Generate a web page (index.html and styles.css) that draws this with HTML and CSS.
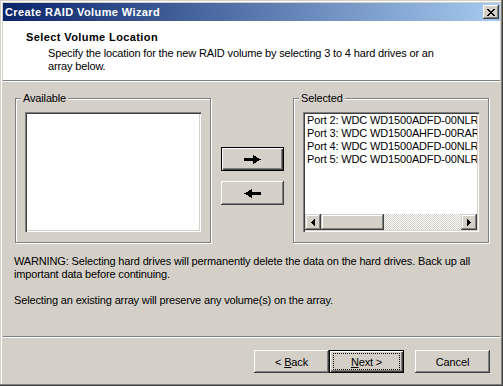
FILE: index.html
```html
<!DOCTYPE html>
<html lang="en">
<head>
  <meta charset="UTF-8" />
  <title>Create RAID Volume Wizard</title>
  <link rel="stylesheet" href="styles.css">
</head>
<body>
  <div class="window">
    <div class="titlebar">
      <span class="title">Create RAID Volume Wizard</span>
      <button class="close-btn">
        <svg width="8" height="7" viewBox="0 0 8 7"><path d="M0 0h2v1H0zM6 0h2v1H6zM1 1h2v1H1zM5 1h2v1H5zM2 2h4v1H2zM3 3h2v1H3zM2 4h4v1H2zM1 5h2v1H1zM5 5h2v1H5zM0 6h2v1H0zM6 6h2v1H6z" fill="#000"/></svg>
      </button>
    </div>

    <div class="wizard-header">
      <div class="header-title">Select Volume Location</div>
      <div class="header-desc">Specify the location for the new RAID volume by selecting 3 to 4 hard drives or an<br>array below.</div>
    </div>

    <div class="wizard-body">
      <div class="picker">
        <div class="group">
          <span class="legend">Available</span>
          <div class="listbox"></div>
        </div>

        <div class="move-btns">
          <button class="win-btn move-btn default">
            <svg width="17" height="9" viewBox="0 0 17 9" shape-rendering="crispEdges"><polygon points="0,3 9,3 9,0 17,4.5 9,9 9,6 0,6" fill="#000"/></svg>
          </button>
          <button class="win-btn move-btn">
            <svg width="17" height="9" viewBox="0 0 17 9" shape-rendering="crispEdges"><polygon points="17,3 8,3 8,0 0,4.5 8,9 8,6 17,6" fill="#000"/></svg>
          </button>
        </div>

        <div class="group">
          <span class="legend">Selected</span>
          <div class="listbox">
            <ul class="list-items">
              <li>Port 2: WDC WD1500ADFD-00NLR5</li>
              <li>Port 3: WDC WD1500AHFD-00RAR5</li>
              <li>Port 4: WDC WD1500ADFD-00NLR5</li>
              <li>Port 5: WDC WD1500ADFD-00NLR5</li>
            </ul>
            <div class="hscroll">
              <div class="scroll-btn">
                <svg width="4" height="7" viewBox="0 0 4 7"><path d="M3 0h1v7H3zM2 1h1v5H2zM1 2h1v3H1zM0 3h1v1H0z" fill="#000"/></svg>
              </div>
              <div class="scroll-thumb"></div>
              <div class="scroll-track"></div>
              <div class="scroll-btn">
                <svg width="4" height="7" viewBox="0 0 4 7"><path d="M0 0h1v7H0zM1 1h1v5H1zM2 2h1v3H2zM3 3h1v1H3z" fill="#000"/></svg>
              </div>
            </div>
          </div>
        </div>
      </div>

      <div class="notes">
        <p>WARNING: Selecting hard drives will permanently delete the data on the hard drives. Back up all<br>important data before continuing.</p>
        <p class="gap">Selecting an existing array will preserve any volume(s) on the array.</p>
      </div>
    </div>

    <div class="wizard-footer">
      <button class="win-btn footer-btn"><span>&lt; <u>B</u>ack</span></button>
      <button class="win-btn footer-btn default"><span class="focus-rect"><span><u>N</u>ext &gt;</span></span></button>
      <button class="win-btn footer-btn cancel-btn">Cancel</button>
    </div>
  </div>
</body>
</html>
```

FILE: styles.css
```css
* {
  box-sizing: border-box;
}

body {
  margin: 0;
  font-family: "Liberation Sans", Arial, sans-serif;
  font-size: 11px;
  letter-spacing: -0.15px;
  color: #000;
}

.window {
  width: 503px;
  height: 386px;
  padding: 3px;
  background: #d4d0c8;
  display: flex;
  flex-direction: column;
  box-shadow: inset -1px -1px #404040,
              inset -2px -2px #808080,
              inset 1px 1px #d4d0c8,
              inset 2px 2px #fff;
}

/* title bar */
.titlebar {
  height: 18px;
  flex-shrink: 0;
  display: flex;
  align-items: center;
  justify-content: space-between;
  padding: 0 1px 0 2px;
  background: linear-gradient(to right, #0a246a, #a6caf0);
  color: #fff;
  font-weight: bold;
  letter-spacing: 0.4px;
}

.close-btn {
  width: 16px;
  height: 14px;
  padding: 0;
  border: none;
  background: #d4d0c8;
  display: flex;
  align-items: center;
  justify-content: center;
  box-shadow: inset -1px -1px #404040,
              inset 1px 1px #fff,
              inset -2px -2px #808080;
}

/* header */
.wizard-header {
  height: 60px;
  flex-shrink: 0;
  background: #fff;
  border-bottom: 1px solid #808080;
  box-shadow: 0 1px #fff;
  padding: 10px 0 0 23px;
  line-height: 13px;
}

.header-title {
  font-weight: bold;
  letter-spacing: 0.4px;
}

.header-desc {
  margin-top: 3px;
  padding-left: 22px;
}

/* body */
.wizard-body {
  flex: 1;
  padding-top: 17px;
}

.picker {
  display: flex;
  padding-left: 12px;
}

.group {
  width: 196px;
  height: 145px;
  border: 1px solid #808080;
  box-shadow: inset 1px 1px #fff, 1px 1px #fff;
  display: flex;
  flex-direction: column;
  align-items: flex-start;
}

.legend {
  margin: -7px 0 0 5px;
  padding: 0 2px;
  line-height: 13px;
  background: #d4d0c8;
}

.listbox {
  width: 176px;
  height: 120px;
  margin: 7px 0 0 9px;
  padding: 2px;
  background: #fff;
  display: flex;
  flex-direction: column;
  box-shadow: inset 1px 1px #808080,
              inset 2px 2px #404040,
              inset -1px -1px #fff,
              inset -2px -2px #d4d0c8;
}

.list-items {
  flex: 1;
  margin: 0;
  padding: 0 0 0 2px;
  list-style: none;
  line-height: 13px;
  white-space: nowrap;
  overflow: hidden;
}

.hscroll {
  height: 16px;
  display: flex;
}

.scroll-btn,
.scroll-thumb {
  background: #d4d0c8;
  box-shadow: inset -1px -1px #404040,
              inset 1px 1px #d4d0c8,
              inset -2px -2px #808080,
              inset 2px 2px #fff;
}

.scroll-btn {
  width: 16px;
  display: flex;
  align-items: center;
  justify-content: center;
}

.scroll-thumb {
  width: 63px;
}

.scroll-track {
  flex: 1;
  background-image: repeating-conic-gradient(#fff 0% 25%, #d4d0c8 0% 50%);
  background-size: 2px 2px;
}

.move-btns {
  width: 82px;
  padding-top: 49px;
  display: flex;
  flex-direction: column;
  align-items: center;
  gap: 10px;
}

/* buttons */
.win-btn {
  padding: 0;
  border: none;
  background: #d4d0c8;
  font-family: inherit;
  font-size: 11px;
  letter-spacing: inherit;
  color: #000;
  display: flex;
  align-items: center;
  justify-content: center;
  box-shadow: inset -1px -1px #404040,
              inset 1px 1px #fff,
              inset -2px -2px #808080;
}

.win-btn.default {
  box-shadow: inset 0 0 0 1px #000,
              inset 1px 1px 0 1px #fff,
              inset -1px -1px 0 1px #404040,
              inset -2px -2px 0 1px #808080;
}

.move-btn {
  width: 63px;
  height: 24px;
}

.notes {
  margin-top: 12px;
  padding-left: 11px;
  line-height: 13px;
}

.notes p {
  margin: 0;
}

.notes .gap {
  margin-top: 13px;
}

/* footer */
.wizard-footer {
  height: 47px;
  flex-shrink: 0;
  border-top: 1px solid #808080;
  box-shadow: inset 0 1px #fff;
  display: flex;
  justify-content: flex-end;
  align-items: flex-start;
  padding: 13px 10px 0 0;
}

.footer-btn {
  width: 75px;
  height: 23px;
}

.focus-rect {
  align-self: stretch;
  flex: 1;
  margin: 3px 4px;
  border: 1px dotted #000;
  display: flex;
  align-items: center;
  justify-content: center;
}

.cancel-btn {
  margin-left: 11px;
}
```
